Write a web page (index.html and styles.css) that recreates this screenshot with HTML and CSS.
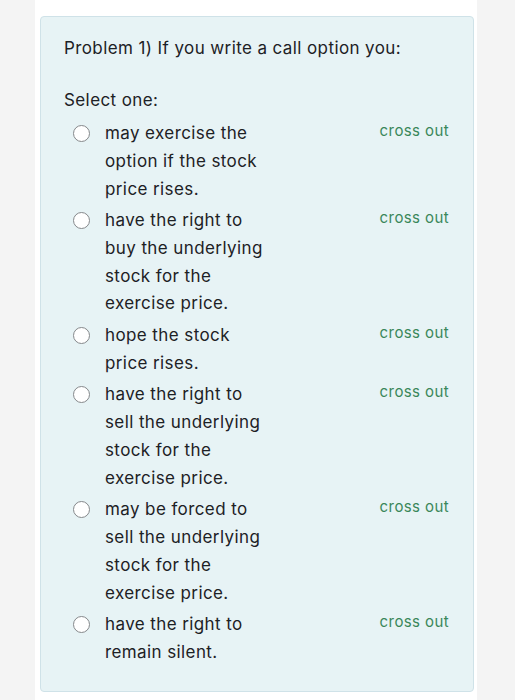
FILE: index.html
```html
<!DOCTYPE html>
<html lang="en">

<head>
  <meta charset="UTF-8">
  <meta name="viewport" content="width=device-width, initial-scale=1.0">
  <title>Problem 1</title>
  <link rel="stylesheet" href="styles.css">
</head>

<body>
  <div class="page">
    <div class="question">
      <div class="qtext">Problem 1) If you write a call option you:</div>
      <div class="prompt">Select one:</div>
      <div class="answers">
        <div class="answer">
          <span class="radio"></span>
          <span class="label">may exercise the option if the stock price rises.</span>
          <a class="cross">cross out</a>
        </div>
        <div class="answer">
          <span class="radio"></span>
          <span class="label">have the right to buy the underlying stock for the exercise price.</span>
          <a class="cross">cross out</a>
        </div>
        <div class="answer">
          <span class="radio"></span>
          <span class="label">hope the stock price rises.</span>
          <a class="cross">cross out</a>
        </div>
        <div class="answer">
          <span class="radio"></span>
          <span class="label">have the right to sell the underlying stock for the exercise price.</span>
          <a class="cross">cross out</a>
        </div>
        <div class="answer">
          <span class="radio"></span>
          <span class="label">may be forced to sell the underlying stock for the exercise price.</span>
          <a class="cross">cross out</a>
        </div>
        <div class="answer">
          <span class="radio"></span>
          <span class="label">have the right to remain silent.</span>
          <a class="cross">cross out</a>
        </div>
      </div>
    </div>
  </div>
</body>

</html>
```

FILE: styles.css
```css
body {
  margin: 0;
  background-color: #f4f4f4;
  font-family: Inter, "Noto Sans", sans-serif;
  color: #1d2125;
}

.page {
  margin-left: 35px;
  width: 442px;
  height: 700px;
  padding: 16px 3px 0 5px;
  box-sizing: border-box;
  background-color: #fff;
}

.question {
  width: 434px;
  height: 676px;
  box-sizing: border-box;
  padding: 17px 24px 0 23px;
  background-color: #e7f3f5;
  border: 1px solid #cfe2e8;
  border-radius: 4px;
}

.qtext,
.prompt,
.answer {
  font-size: 17px;
  letter-spacing: 0.4px;
}

.qtext {
  line-height: 28px;
}

.prompt {
  margin-top: 24px;
  line-height: 28px;
}

.answers {
  margin-top: 6px;
}

.answer {
  display: flex;
  align-items: flex-start;
  margin-bottom: 3.7px;
  line-height: 27.8px;
}

.radio {
  flex: none;
  width: 15px;
  height: 15px;
  margin: 5px 15px 0 9px;
  border: 1.5px solid #85888b;
  border-radius: 50%;
  background-color: #fff;
}

.label {
  width: 160px;
}

.cross {
  margin-left: auto;
  color: #3a875a;
  font-size: 15px;
  letter-spacing: 0.4px;
  line-height: 22px;
}
```
